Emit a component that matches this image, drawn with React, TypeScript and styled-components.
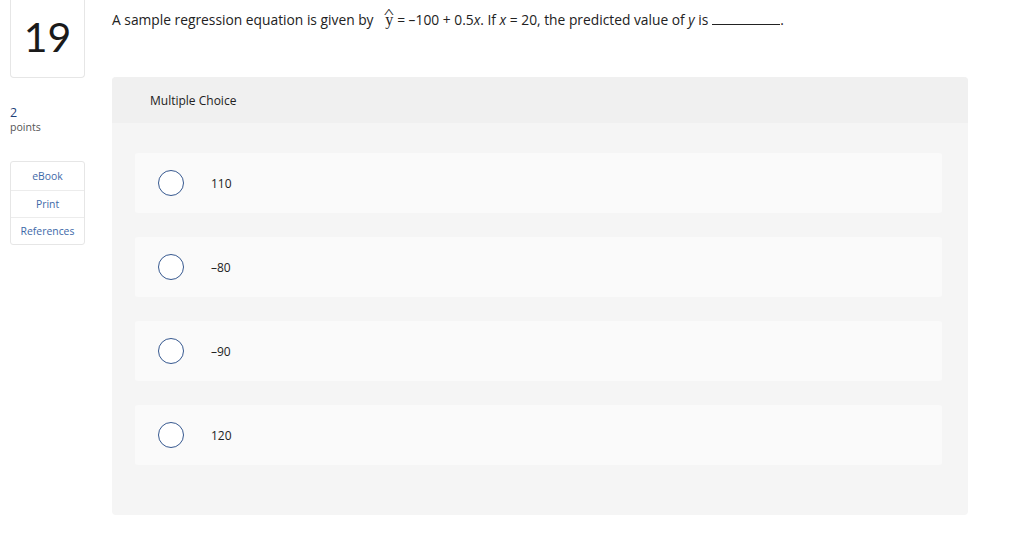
import React from 'react';
import styled, { createGlobalStyle } from 'styled-components';

const GlobalStyle = createGlobalStyle`
body {
    margin: 0;
    background: #ffffff;
    font-family: "Open Sans", Lato, Arial, sans-serif;
    color: #222222;
}
`;

const Page = styled.div`
display: flex;
align-items: flex-start;
width: 1024px;
height: 551px;
`;

const Side = styled.div`
width: 75px;
margin-left: 10px;
display: flex;
flex-direction: column;
`;

const NumberBox = styled.div`
height: 78px;
box-sizing: border-box;
border: 1px solid #e6e6e6;
border-top: none;
border-radius: 0 0 4px 4px;
display: flex;
align-items: center;
justify-content: center;
font-family: Lato, "Open Sans", sans-serif;
font-size: 41px;
color: #1a1a1a;
padding-bottom: 4px;
`;

const Points = styled.div`
margin-top: 27px;
font-size: 10.6px;
line-height: 15px;
color: #555555;
`;

const PointValue = styled.div`
font-size: 12.5px;
color: #1f3f7a;
`;

const LinkBox = styled.div`
margin-top: 26px;
border: 1px solid #e6e6e6;
border-radius: 3px;
display: flex;
flex-direction: column;
`;

const LinkRow = styled.div<{ $height: number }>`
height: ${({ $height }) => $height}px;
display: flex;
align-items: center;
justify-content: center;
font-size: 10.4px;
color: #3e69a8;
& + & {
    border-top: 1px solid #ececec;
}
`;

const Main = styled.div`
margin-left: 27px;
width: 856px;
display: flex;
flex-direction: column;
`;

const Question = styled.div`
height: 77px;
padding-top: 11px;
box-sizing: border-box;
font-size: 13.8px;
line-height: 18px;
color: #222222;
white-space: nowrap;
`;

const Hat = styled.span`
font-family: "Liberation Serif", "DejaVu Serif", serif;
font-size: 16px;
position: relative;
display: inline-block;
margin: 0 4px 0 8px;
&::before {
    content: '^';
    position: absolute;
    left: 0;
    right: 0;
    top: -7px;
    text-align: center;
    font-size: 13px;
    transform: scaleX(1.6);
}
`;

const Ital = styled.i``;

const Blank = styled.span`
display: inline-block;
width: 68px;
border-bottom: 1px solid #222222;
margin-left: 4px;
`;

const Panel = styled.div`
height: 438px;
background: #f5f5f5;
border-radius: 4px;
overflow: hidden;
display: flex;
flex-direction: column;
`;

const PanelHeader = styled.div`
height: 46px;
background: #f0f0f0;
display: flex;
align-items: center;
padding-left: 38px;
font-size: 12px;
color: #222222;
`;

const Options = styled.div`
padding: 30px 0 0 23px;
width: 807px;
display: flex;
flex-direction: column;
gap: 24px;
`;

const Option = styled.div`
height: 60px;
background: #fafafa;
border-radius: 3px;
display: flex;
align-items: center;
padding-left: 23px;
`;

const Radio = styled.span`
width: 24px;
height: 24px;
border: 1px solid #36588f;
border-radius: 50%;
background: #ffffff;
`;

const OptionText = styled.span`
margin-left: 27px;
font-size: 12px;
color: #222222;
`;

const choices = ['110', '\u201380', '\u201390', '120'];

export default function App() {
    return (
        <Page>
            <GlobalStyle />
            <Side>
                <NumberBox>19</NumberBox>
                <Points>
                    <PointValue>2</PointValue>
                    points
                </Points>
                <LinkBox>
                    <LinkRow $height={28}>eBook</LinkRow>
                    <LinkRow $height={26}>Print</LinkRow>
                    <LinkRow $height={26}>References</LinkRow>
                </LinkBox>
            </Side>
            <Main>
                <Question>
                    A sample regression equation is given by <Hat>y</Hat>= {'\u2013'}100 + 0.5<Ital>x</Ital>. If <Ital>x</Ital> = 20,
                    the predicted value of <Ital>y</Ital> is<Blank />.
                </Question>
                <Panel>
                    <PanelHeader>Multiple Choice</PanelHeader>
                    <Options>
                        {choices.map((c) => (
                            <Option key={c}>
                                <Radio />
                                <OptionText>{c}</OptionText>
                            </Option>
                        ))}
                    </Options>
                </Panel>
            </Main>
        </Page>
    );
}
